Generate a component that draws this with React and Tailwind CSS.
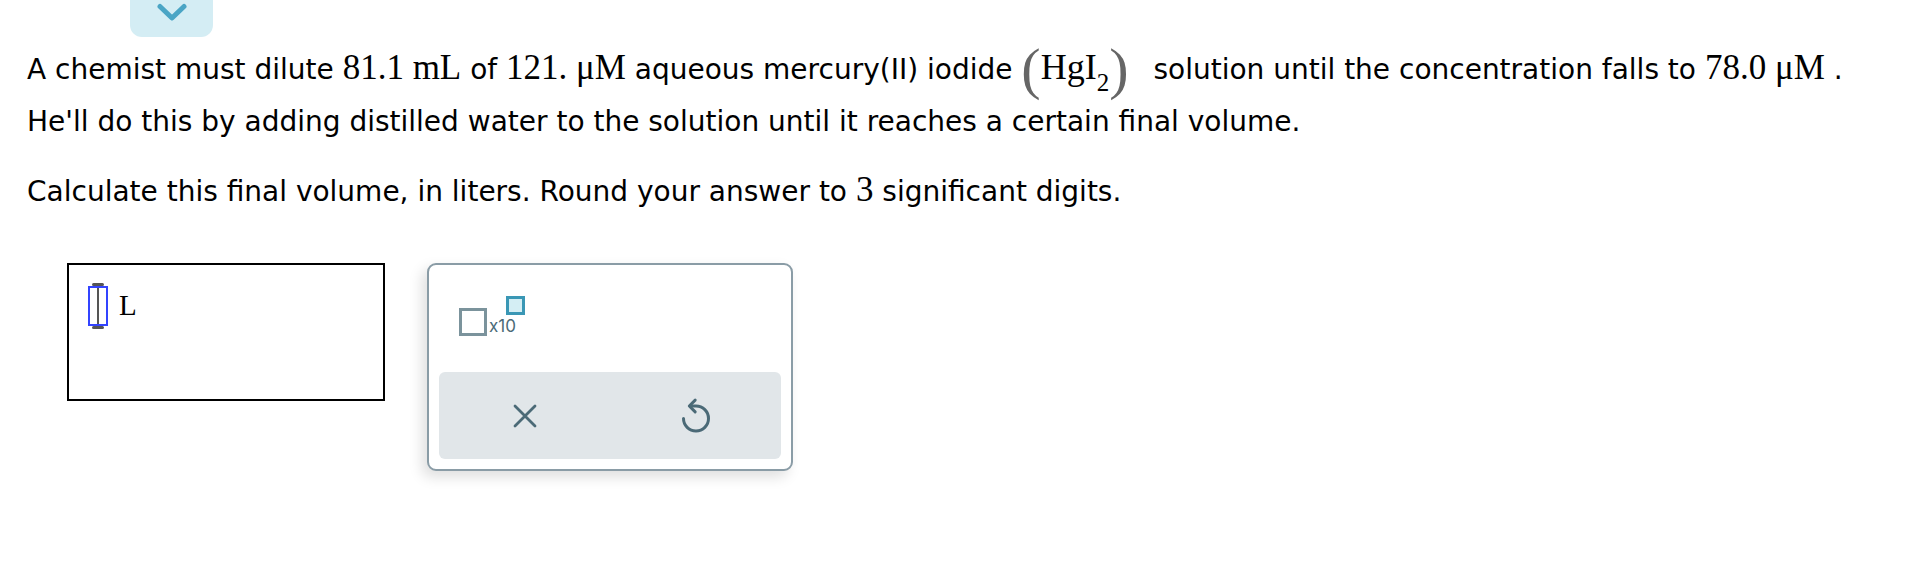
const serif = "font-['Liberation_Serif',serif]";

function M({ children }) {
  return <span className={`${serif} text-[35px] leading-none`}>{children}</span>;
}

function UndoIcon() {
  return (
    <svg width="40" height="40" viewBox="0 0 24 24" fill="none" stroke="#4b6a77" strokeWidth="1.8" strokeLinecap="round" strokeLinejoin="round">
      <path d="M11.5 2.5 8 6l3.5 3.5" />
      <path d="M8.5 6H12a7.5 7.5 0 1 1-7.5 7.5" />
    </svg>
  );
}

function CrossIcon() {
  return (
    <svg width="24" height="24" viewBox="0 0 24 24" fill="none" stroke="#4b6a77" strokeWidth="2.8" strokeLinecap="round">
      <path d="M2 2 22 22M22 2 2 22" />
    </svg>
  );
}

export default function App() {
  return (
    <div className="min-h-[574px] w-full bg-white font-['DejaVu_Sans',sans-serif] text-[28px] text-black">
      <div className="flex pl-[130px]">
        <button className="flex h-[37px] w-[83px] justify-center rounded-b-[12px] bg-[#d4edf4] pt-[3px]">
          <svg width="32" height="19" viewBox="0 0 32 19" fill="none" stroke="#4aa5c5" strokeWidth="5" strokeLinecap="round" strokeLinejoin="round">
            <polyline points="4,3.5 16,15 28,3.5" />
          </svg>
        </button>
      </div>

      <div className="pl-[27px]">
        <div className="mt-[12px] h-[40px] whitespace-nowrap leading-[40px]">
          A chemist must dilute <M>81.1 mL</M> of <M>121. μM</M> aqueous mercury(II) iodide{" "}
          <span className={`${serif} pr-[16px] text-[36px] leading-none`}>
            <span className="align-[-9px] text-[58px] leading-[0] text-[#666]">(</span>
            HgI<sub className="bottom-0 align-[-12px] text-[25px]">2</sub>
            <span className="align-[-9px] text-[58px] leading-[0] text-[#666]">)</span>
          </span>{" "}
          solution until the concentration falls to <M>78.0 μM</M> .
        </div>
        <div className="mt-[13px] h-[40px] whitespace-nowrap leading-[40px]">
          He'll do this by adding distilled water to the solution until it reaches a certain final volume.
        </div>
        <div className="mt-[30px] h-[40px] whitespace-nowrap leading-[40px]">
          Calculate this final volume, in liters. Round your answer to <M>3</M> significant digits.
        </div>
      </div>

      <div className="mt-[51px] flex items-start gap-[42px] pl-[67px]">
        <div className="flex h-[138px] w-[318px] items-start gap-[11px] border-2 border-black pl-[19px] pt-[18px]">
          <div className="flex flex-col items-center">
            <div className="h-[3px] w-[12px] rounded-full bg-[#555]" />
            <div className="flex h-[40px] w-[20px] justify-center border-2 border-[#3344ff]">
              <div className="h-full w-[2px] bg-[#555]" />
            </div>
            <div className="h-[3px] w-[12px] rounded-full bg-[#555]" />
          </div>
          <span className={`${serif} mt-[6px] text-[29px] leading-[32px]`}>L</span>
        </div>

        <div className="flex h-[208px] w-[366px] flex-col rounded-[9px] border-2 border-[#8a9ca6] bg-white px-[10px] pb-[10px] shadow-[-5px_6px_14px_rgba(0,0,0,0.13)]">
          <div className="flex h-[107px] items-start pl-[20px] pt-[31px]">
            <div className="mt-[12px] h-[28px] w-[28px] border-[3px] border-[#7b939c]" />
            <span className="mt-[20px] ml-[2px] font-['Inter',sans-serif] text-[17px] leading-[20px] text-[#4b6a77]">x10</span>
            <div className="ml-[-10px] h-[19px] w-[19px] border-[3px] border-[#3a97b5] bg-[#d4eef4]" />
          </div>
          <div className="grid flex-1 grid-cols-2 rounded-[6px] bg-[#e1e6e9]">
            <div className="flex items-center justify-center">
              <CrossIcon />
            </div>
            <div className="flex items-center justify-center">
              <UndoIcon />
            </div>
          </div>
        </div>
      </div>
    </div>
  );
}
